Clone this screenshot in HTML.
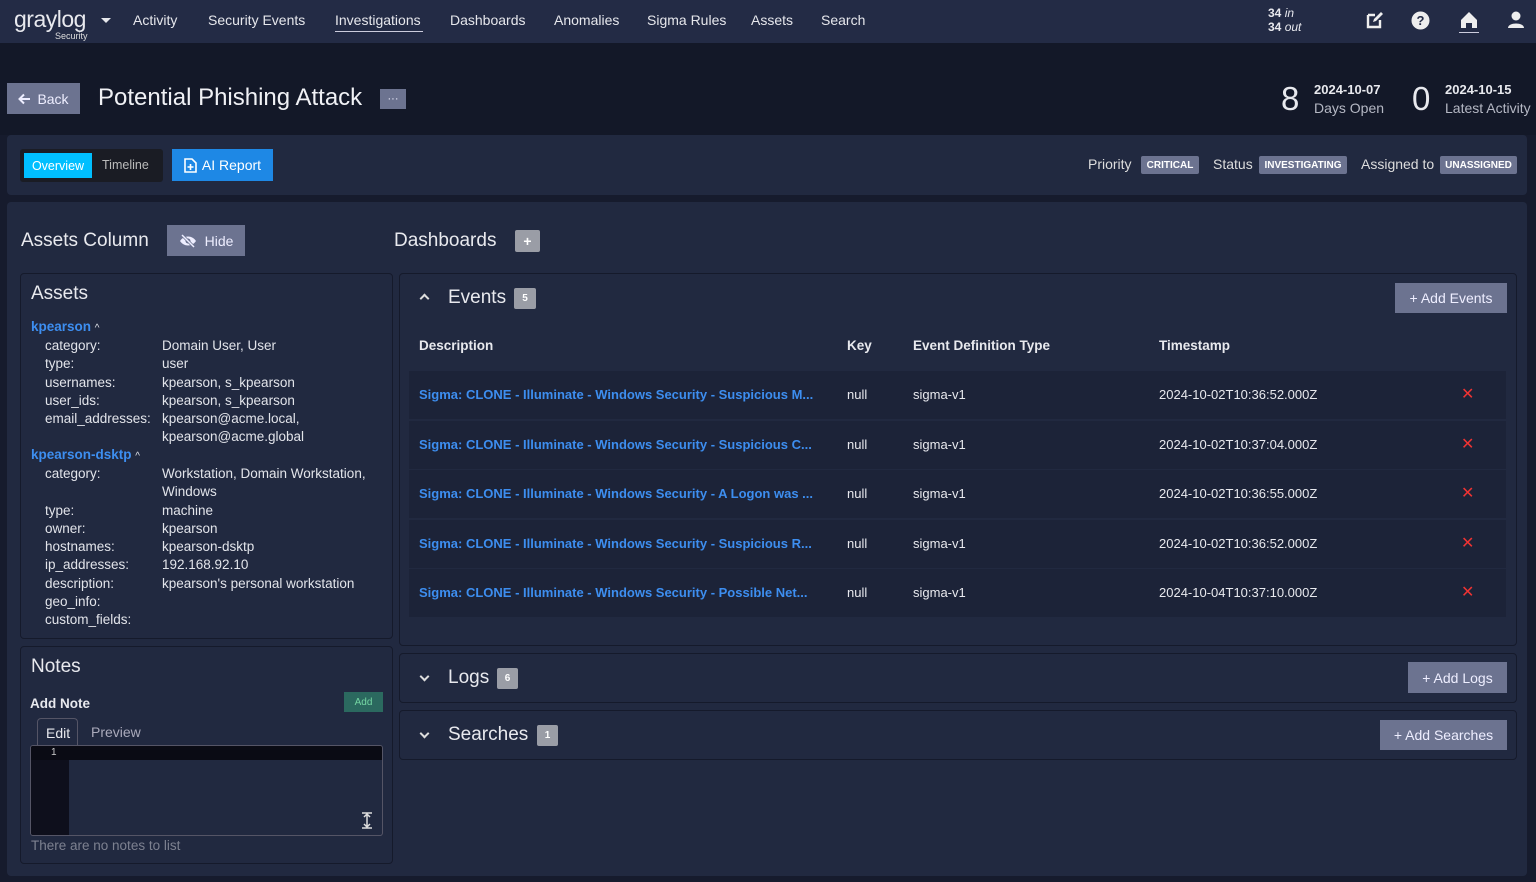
<!DOCTYPE html>
<html><head><meta charset="utf-8"><style>
*{box-sizing:border-box;margin:0;padding:0}
body{width:1536px;height:882px;overflow:hidden;background:#161b2d;font-family:"Liberation Sans","DejaVu Sans",sans-serif;color:#e8e9ee;position:relative}
.a{position:absolute}
.nav{left:0;top:0;width:1536px;height:43px;background:#232b45}
.nav .it{position:absolute;top:12px;font-size:14px;color:#e6e7ec}
.band{left:0;top:43px;width:1536px;height:92px;background:#131828}
.btn{background:#6c7390;color:#eef;font-size:14px;display:flex;align-items:center;justify-content:center}
.panel{background:#212940;border-radius:4px}
.box{background:#212940;border:1px solid #151a2b;border-radius:4px}
.badge{background:#6c7390;color:#fff;font-weight:bold;font-size:10px;border-radius:2px;display:flex;align-items:center;justify-content:center}
.gb{background:#9a9da6;color:#fff;font-size:10px;font-weight:bold;border-radius:2px;display:flex;align-items:center;justify-content:center}
.kv{font-size:13.5px;line-height:18.3px;color:#e2e4ea}
.row{position:absolute;left:409px;width:1097px;height:48px;background:#1c2338;font-size:13px}
.row span{position:absolute;top:16px}
.row .d{left:10px;color:#3d8ef0;font-weight:bold;font-size:13px}
.row .x{left:1052px;color:#e33;font-size:16px;top:13px}
.th{position:absolute;top:338px;font-weight:bold;font-size:13.5px}
.chev{position:absolute;width:7px;height:7px;border-left:2px solid #ddd;border-top:2px solid #ddd}
</style></head><body>
<div class="a nav">
 <div class="a" style="left:14px;top:6px;font-size:23px;color:#e8e9ee;letter-spacing:-0.5px">graylog</div>
 <div class="a" style="left:55px;top:31px;font-size:9px;color:#ddd">Security</div>
 <div class="a" style="left:101px;top:18px;width:0;height:0;border-left:5px solid transparent;border-right:5px solid transparent;border-top:5px solid #e6e7ec"></div>
 <div class="it" style="left:133px">Activity</div>
 <div class="it" style="left:208px">Security Events</div>
 <div class="it" style="left:335px">Investigations</div>
 <div class="a" style="left:335px;top:31px;width:88px;height:1px;background:#ccd"></div>
 <div class="it" style="left:450px">Dashboards</div>
 <div class="it" style="left:554px">Anomalies</div>
 <div class="it" style="left:647px">Sigma Rules</div>
 <div class="it" style="left:751px">Assets</div>
 <div class="it" style="left:821px">Search</div>
 <div class="a" style="left:1268px;top:6px;font-size:12px;font-weight:bold;line-height:14px">34 <i style="font-weight:normal">in</i><br>34 <i style="font-weight:normal">out</i></div>
 <svg class="a" style="left:1365px;top:10px" width="20" height="20" viewBox="0 0 20 20"><path d="M3 5h7M3 5v12h12v-7" stroke="#eee" stroke-width="2.4" fill="none"/><path d="M8 12l1-3 7-7 2 2-7 7z" fill="#eee"/></svg>
 <svg class="a" style="left:1411px;top:11px" width="19" height="19"><circle cx="9.5" cy="9.5" r="9" fill="#eee"/><text x="9.5" y="14" font-size="13" font-weight="bold" text-anchor="middle" fill="#232b45" font-family="Liberation Sans">?</text></svg>
 <svg class="a" style="left:1460px;top:11px" width="18" height="18"><path d="M1 9L9 1l8 8v8h-5v-5H6v5H1z" fill="#eee"/></svg>
 <div class="a" style="left:1459px;top:32px;width:20px;height:1px;background:#ccd"></div>
 <svg class="a" style="left:1507px;top:11px" width="18" height="18"><circle cx="9" cy="5" r="4.5" fill="#eee"/><path d="M1 17c0-6 16-6 16 0z" fill="#eee"/></svg>
</div>
<div class="a band"></div>
<div class="a btn" style="left:7px;top:83px;width:73px;height:31px;font-size:14px"><svg width="13" height="12" style="margin-right:6px"><path d="M12 6H2M6 1.5L1.5 6 6 10.5" stroke="#eef" stroke-width="2" fill="none"/></svg>Back</div>
<div class="a" style="left:98px;top:84px;font-size:24px;color:#f0f1f5">Potential Phishing Attack</div>
<div class="a btn" style="left:380px;top:89px;width:26px;height:20px;font-size:11px">···</div>
<div class="a" style="left:1281px;top:80px;font-size:33px;font-weight:300">8</div>
<div class="a" style="left:1314px;top:82px;font-size:13px;font-weight:bold">2024-10-07</div>
<div class="a" style="left:1314px;top:100px;font-size:14px;color:#b5b8c4">Days Open</div>
<div class="a" style="left:1412px;top:80px;font-size:33px;font-weight:300">0</div>
<div class="a" style="left:1445px;top:82px;font-size:13px;font-weight:bold">2024-10-15</div>
<div class="a" style="left:1445px;top:100px;font-size:14px;color:#b5b8c4">Latest Activity</div>

<div class="a panel" style="left:7px;top:135px;width:1520px;height:60px"></div>
<div class="a" style="left:20px;top:149px;width:143px;height:33px;background:#1a1c24;border-radius:3px"></div>
<div class="a" style="left:24px;top:153px;width:68px;height:25px;background:#00bfff;color:#fff;font-size:12.5px;display:flex;align-items:center;justify-content:center">Overview</div>
<div class="a" style="left:102px;top:158px;font-size:12.5px;color:#bbb">Timeline</div>
<div class="a" style="left:172px;top:149px;width:101px;height:32px;background:#1e88e5;color:#fff;font-size:14px;display:flex;align-items:center;justify-content:center"><svg width="13" height="15" style="margin-right:5px"><path d="M1 1h7l4 4v9H1z" stroke="#fff" stroke-width="1.6" fill="none"/><path d="M6.5 6v6M3.5 9h6" stroke="#fff" stroke-width="1.6"/></svg>AI Report</div>
<div class="a" style="left:1088px;top:156px;font-size:14px;color:#ddd">Priority</div>
<div class="a badge" style="left:1141px;top:156px;width:58px;height:18px">CRITICAL</div>
<div class="a" style="left:1213px;top:156px;font-size:14px;color:#ddd">Status</div>
<div class="a badge" style="left:1259px;top:156px;width:88px;height:18px">INVESTIGATING</div>
<div class="a" style="left:1361px;top:156px;font-size:14px;color:#ddd">Assigned to</div>
<div class="a badge" style="left:1440px;top:156px;width:77px;height:18px">UNASSIGNED</div>

<div class="a panel" style="left:7px;top:202px;width:1520px;height:674px"></div>
<div class="a" style="left:21px;top:230px;font-size:19px">Assets Column</div>
<div class="a btn" style="left:167px;top:225px;width:78px;height:31px"><svg width="18" height="14" style="margin-right:8px"><path d="M1 7C5 1 13 1 17 7C13 13 5 13 1 7z" fill="#eef"/><circle cx="9" cy="7" r="2.5" fill="#6c7390"/><path d="M3 1l12 12" stroke="#6c7390" stroke-width="3"/><path d="M3 1l12 12" stroke="#eef" stroke-width="1.5"/></svg>Hide</div>
<div class="a" style="left:394px;top:230px;font-size:19px">Dashboards</div>
<div class="a gb" style="left:515px;top:230px;width:25px;height:22px;font-size:14px">+</div>

<div class="a box" style="left:20px;top:273px;width:373px;height:366px"></div>
<div class="a" style="left:31px;top:283px;font-size:19px">Assets</div>
<div class="a kv" style="left:31px;top:318px"><b style="color:#3d8ef0">kpearson</b> <span style="font-size:10px">^</span></div>
<div class="a kv" style="left:45px;top:337px">category:<br>type:<br>usernames:<br>user_ids:<br>email_addresses:</div>
<div class="a kv" style="left:162px;top:337px">Domain User, User<br>user<br>kpearson, s_kpearson<br>kpearson, s_kpearson<br>kpearson@acme.local,<br>kpearson@acme.global</div>
<div class="a kv" style="left:31px;top:446px"><b style="color:#3d8ef0">kpearson-dsktp</b> <span style="font-size:10px">^</span></div>
<div class="a kv" style="left:45px;top:465px">category:<br><br>type:<br>owner:<br>hostnames:<br>ip_addresses:<br>description:<br>geo_info:<br>custom_fields:</div>
<div class="a kv" style="left:162px;top:465px">Workstation, Domain Workstation,<br>Windows<br>machine<br>kpearson<br>kpearson-dsktp<br>192.168.92.10<br>kpearson's personal workstation</div>

<div class="a box" style="left:20px;top:646px;width:373px;height:218px"></div>
<div class="a" style="left:31px;top:656px;font-size:19px">Notes</div>
<div class="a" style="left:30px;top:696px;font-size:13.5px;font-weight:bold">Add Note</div>
<div class="a" style="left:344px;top:692px;width:39px;height:20px;background:#2e7a67;color:#8fb;font-size:10px;display:flex;align-items:center;justify-content:center;opacity:.8">Add</div>
<div class="a" style="left:37px;top:718px;width:41px;height:28px;border:1px solid #556;border-bottom:none;border-radius:4px 4px 0 0;font-size:14px;padding:6px 0 0 8px">Edit</div>
<div class="a" style="left:91px;top:724px;font-size:14px;color:#aab">Preview</div>
<div class="a" style="left:30px;top:745px;width:353px;height:91px;border:1px solid #556;border-radius:3px;background:#212940;overflow:hidden">
 <div class="a" style="left:0;top:0;width:38px;height:91px;background:#0e0f1c"></div>
 <div class="a" style="left:0;top:0;width:353px;height:14px;background:#0a0b14"></div>
 <div class="a" style="left:20px;top:1px;font-size:10px;color:#ccc">1</div>
 <svg class="a" style="left:330px;top:66px" width="12" height="17"><path d="M1 1h10M1 16h10M6 2v13M3 5l3-3 3 3M3 12l3 3 3-3" stroke="#ddd" stroke-width="1.5" fill="none"/></svg>
</div>
<div class="a" style="left:31px;top:838px;font-size:13.5px;color:#7d8190">There are no notes to list</div>

<div class="a box" style="left:399px;top:273px;width:1118px;height:373px"></div>
<div class="chev" style="left:421px;top:295px;transform:rotate(45deg)"></div>
<div class="a" style="left:448px;top:287px;font-size:19px">Events</div>
<div class="a gb" style="left:514px;top:288px;width:22px;height:21px">5</div>
<div class="a btn" style="left:1395px;top:283px;width:112px;height:30px">+ Add Events</div>
<div class="th" style="left:419px">Description</div>
<div class="th" style="left:847px">Key</div>
<div class="th" style="left:913px">Event Definition Type</div>
<div class="th" style="left:1159px">Timestamp</div>
<div class="row" style="top:371px"><span class="d">Sigma: CLONE - Illuminate - Windows Security - Suspicious M...</span><span style="left:438px">null</span><span style="left:504px">sigma-v1</span><span style="left:750px">2024-10-02T10:36:52.000Z</span><span class="x">✕</span></div>
<div class="row" style="top:421px"><span class="d">Sigma: CLONE - Illuminate - Windows Security - Suspicious C...</span><span style="left:438px">null</span><span style="left:504px">sigma-v1</span><span style="left:750px">2024-10-02T10:37:04.000Z</span><span class="x">✕</span></div>
<div class="row" style="top:470px"><span class="d">Sigma: CLONE - Illuminate - Windows Security - A Logon was ...</span><span style="left:438px">null</span><span style="left:504px">sigma-v1</span><span style="left:750px">2024-10-02T10:36:55.000Z</span><span class="x">✕</span></div>
<div class="row" style="top:520px"><span class="d">Sigma: CLONE - Illuminate - Windows Security - Suspicious R...</span><span style="left:438px">null</span><span style="left:504px">sigma-v1</span><span style="left:750px">2024-10-02T10:36:52.000Z</span><span class="x">✕</span></div>
<div class="row" style="top:569px"><span class="d">Sigma: CLONE - Illuminate - Windows Security - Possible Net...</span><span style="left:438px">null</span><span style="left:504px">sigma-v1</span><span style="left:750px">2024-10-04T10:37:10.000Z</span><span class="x">✕</span></div>

<div class="a box" style="left:399px;top:653px;width:1118px;height:50px"></div>
<div class="chev" style="left:421px;top:673px;transform:rotate(225deg)"></div>
<div class="a" style="left:448px;top:667px;font-size:19px">Logs</div>
<div class="a gb" style="left:497px;top:668px;width:21px;height:21px">6</div>
<div class="a btn" style="left:1408px;top:662px;width:99px;height:31px">+ Add Logs</div>
<div class="a box" style="left:399px;top:710px;width:1118px;height:50px"></div>
<div class="chev" style="left:421px;top:730px;transform:rotate(225deg)"></div>
<div class="a" style="left:448px;top:724px;font-size:19px">Searches</div>
<div class="a gb" style="left:537px;top:725px;width:21px;height:21px">1</div>
<div class="a btn" style="left:1380px;top:720px;width:127px;height:30px">+ Add Searches</div>
</body></html>
